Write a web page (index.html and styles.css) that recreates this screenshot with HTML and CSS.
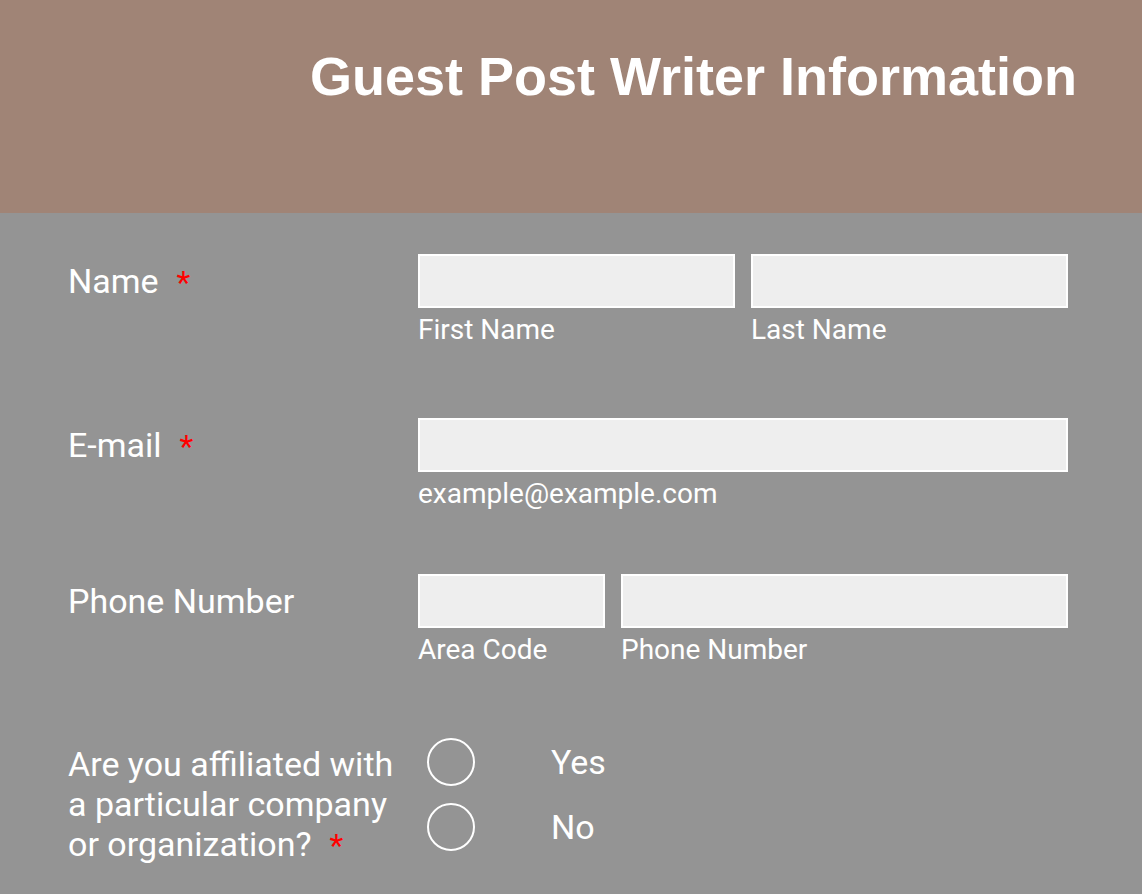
FILE: index.html
```html
<!DOCTYPE html>
<html lang="en">

<head>
    <meta charset="UTF-8">
    <meta name="viewport" content="width=device-width, initial-scale=1.0">
    <title>Guest Post Writer Information</title>
    <link rel="stylesheet" href="styles.css">
</head>

<body>
    <header class="form-header">
        <h1>Guest Post Writer Information</h1>
    </header>
    <form class="form">
        <div class="row row-name">
            <label class="row-label">Name<span class="req">*</span></label>
            <div class="fields">
                <div class="field field-half">
                    <input type="text">
                    <span class="sub">First Name</span>
                </div>
                <div class="field field-half">
                    <input type="text">
                    <span class="sub">Last Name</span>
                </div>
            </div>
        </div>
        <div class="row row-email">
            <label class="row-label">E-mail<span class="req">*</span></label>
            <div class="fields">
                <div class="field field-full">
                    <input type="email">
                    <span class="sub">example@example.com</span>
                </div>
            </div>
        </div>
        <div class="row row-phone">
            <label class="row-label">Phone Number</label>
            <div class="fields">
                <div class="field field-area">
                    <input type="text">
                    <span class="sub">Area Code</span>
                </div>
                <div class="field field-phone">
                    <input type="text">
                    <span class="sub">Phone Number</span>
                </div>
            </div>
        </div>
        <div class="row row-question">
            <label class="row-label">Are you affiliated with a particular company or organization?<span class="req">*</span></label>
            <div class="options">
                <label class="option"><input type="radio" name="affiliated"><span>Yes</span></label>
                <label class="option"><input type="radio" name="affiliated"><span>No</span></label>
            </div>
        </div>
    </form>
</body>

</html>
```

FILE: styles.css
```css
* {
    margin: 0;
    padding: 0;
    box-sizing: border-box;
}

body {
    background: #949494;
    color: #ffffff;
    font-family: Roboto, 'Noto Sans', sans-serif;
}

.form-header {
    background: #a08476;
    height: 213px;
    padding: 44px 65px 0 68px;
    text-align: right;
}

.form-header h1 {
    font-family: 'Liberation Sans', Arial, sans-serif;
    font-weight: bold;
    font-size: 54px;
    line-height: 64px;
}

.form {
    padding: 0 74px 0 68px;
}

.row {
    display: grid;
    grid-template-columns: 350px 1fr;
    padding-top: 32px;
    padding-bottom: 32px;
}

.row-name {
    padding-top: 41px;
    padding-bottom: 40px;
}

.row-question {
    padding-top: 40px;
}

.row-label {
    font-size: 34px;
    line-height: 40px;
    padding-top: 7px;
}

.req {
    color: #ff0000;
    font-size: 32px;
    line-height: 1;
    margin-left: 18px;
}

.fields {
    display: flex;
    gap: 16px;
}

.field {
    display: flex;
    flex-direction: column;
}

.field-half {
    flex: 1;
}

.field-full {
    flex: 1;
}

.field-area {
    width: 187px;
}

.field-phone {
    flex: 1;
}

.field input {
    height: 54px;
    background: #eeeeee;
    border: 2px solid #ffffff;
    outline: none;
    font-size: 20px;
}

.sub {
    font-size: 28px;
    line-height: 32px;
    margin-top: 6px;
}

.row-question .row-label {
    padding-top: 6px;
}

.options {
    display: flex;
    flex-direction: column;
    gap: 17px;
    padding-left: 9px;
}

.option {
    display: flex;
    align-items: center;
    gap: 76px;
    font-size: 34px;
}

.option input {
    appearance: none;
    width: 48px;
    height: 48px;
    border: 2px solid #ffffff;
    border-radius: 50%;
    background: transparent;
}
```
